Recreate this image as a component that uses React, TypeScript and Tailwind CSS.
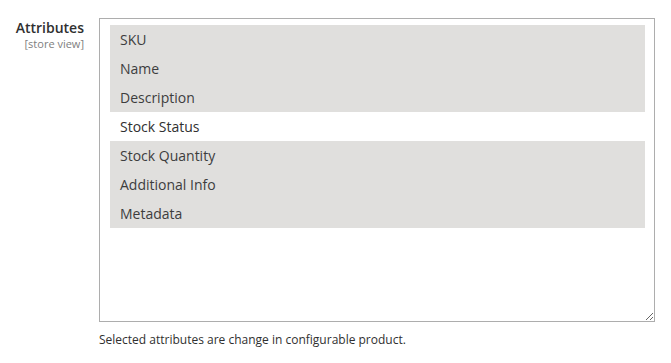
import React from "react";

const options = [
  { label: "SKU", selected: true },
  { label: "Name", selected: true },
  { label: "Description", selected: true },
  { label: "Stock Status", selected: false },
  { label: "Stock Quantity", selected: true },
  { label: "Additional Info", selected: true },
  { label: "Metadata", selected: true },
];

export default function App() {
  return (
    <div
      className="w-[671px] h-[363px] bg-white text-[#303030]"
      style={{ fontFamily: '"Open Sans", "Liberation Sans", sans-serif' }}
    >
      <div className="flex pt-[18px]">
        <div className="w-[84px] text-right pt-[1px]">
          <div className="text-[14px] font-semibold leading-[18px] text-[#303030]">Attributes</div>
          <div className="text-[11px] leading-[14px] text-[#808080]">[store view]</div>
        </div>
        <div className="ml-[15px] flex flex-col">
          <div className="w-[556px] h-[304px] border border-[#adadad] bg-white pt-[6px] pl-[10px] pr-[9px] resize-y overflow-auto">
            {options.map((o) => (
              <div
                key={o.label}
                className={
                  o.selected
                    ? "h-[29px] flex items-center pl-[10px] text-[14px] bg-[#e0dfdd] text-[#3d3d3d]"
                    : "h-[29px] flex items-center pl-[10px] text-[14px] bg-white text-[#303030]"
                }
              >
                {o.label}
              </div>
            ))}
          </div>
          <div className="mt-[10px] text-[12px] leading-[16px] text-[#303030]">
            Selected attributes are change in configurable product.
          </div>
        </div>
      </div>
    </div>
  );
}
